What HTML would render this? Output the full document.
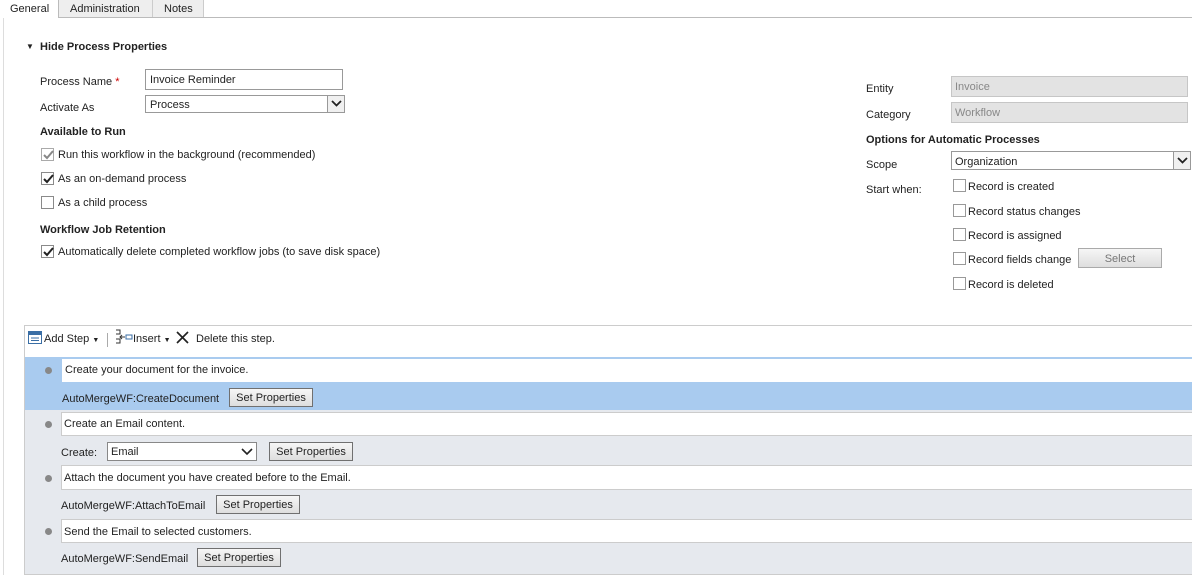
<!DOCTYPE html>
<html><head><style>
*{box-sizing:border-box}
body{margin:0;width:1192px;height:575px;background:#fff;font-family:"Liberation Sans",sans-serif;font-size:11px;color:#222;position:relative;overflow:hidden}
.a{position:absolute;white-space:nowrap}
.b{font-weight:bold}
.inp{position:absolute;border:1px solid #999;background:#fff;height:21px;padding:4px 4px;white-space:nowrap}
.dis{background:#e3e3e3;border-color:#c6c6c6;color:#888}
.dd{position:absolute;right:0;top:0;width:17px;height:19px;border-left:1px solid #999;background:#f0f0f0}
.cb{position:absolute;width:13px;height:13px;border:1px solid #8a8a8a;background:#fff}
.cb svg{position:absolute;left:0;top:0}
.btn{position:absolute;border:1px solid #707070;background:linear-gradient(#f6f6f6,#dedede);height:19px;padding:3px 0;font-size:11px;text-align:center;white-space:nowrap;overflow:hidden}
.dot{position:absolute;width:7px;height:7px;border-radius:50%;background:#888}
</style></head><body>
<div class="a" style="left:0;top:17px;width:1192px;border-top:1px solid #bbb"></div>
<div class="a" style="left:3px;top:0;height:575px;border-left:1px solid #ddd"></div>
<div class="a" style="left:0;top:0;width:59px;height:18px;background:#fff;border-right:1px solid #bbb;padding:3px 0 0 10px">General</div>
<div class="a" style="left:59px;top:0;width:94px;height:17px;background:#eee;border-right:1px solid #ccc;padding:3px 0 0 11px">Administration</div>
<div class="a" style="left:153px;top:0;width:51px;height:17px;background:#eee;border-right:1px solid #ccc;padding:3px 0 0 11px">Notes</div>
<div class="a b" style="left:26px;top:42px;font-size:8px">&#9660;</div>
<div class="a b" style="left:40px;top:41px">Hide Process Properties</div>
<div class="a" style="left:40px;top:76px">Process Name <span style="color:#c00">*</span></div>
<div class="inp" style="left:145px;top:69px;width:198px">Invoice Reminder</div>
<div class="a" style="left:40px;top:102px">Activate As</div>
<div class="inp" style="left:145px;top:95px;width:200px;height:18px;padding:3px 4px">Process<div class="dd" style="height:16px"><svg width="17" height="16"><path d="M4 5l4.5 4.5L13 5" stroke="#222" stroke-width="1.8" fill="none"/></svg></div></div>
<div class="a b" style="left:40px;top:126px">Available to Run</div>
<div class="cb" style="left:41px;top:148px;border-color:#aaa"><svg width="13" height="13"><path d="M2 6l3 3 6-7" stroke="#888" stroke-width="2" fill="none"/></svg></div>
<div class="a" style="left:58px;top:149px">Run this workflow in the background (recommended)</div>
<div class="cb" style="left:41px;top:172px"><svg width="13" height="13"><path d="M2 6l3 3 6-7" stroke="#222" stroke-width="2" fill="none"/></svg></div>
<div class="a" style="left:58px;top:173px">As an on-demand process</div>
<div class="cb" style="left:41px;top:196px"></div>
<div class="a" style="left:58px;top:197px">As a child process</div>
<div class="a b" style="left:40px;top:224px">Workflow Job Retention</div>
<div class="cb" style="left:41px;top:245px"><svg width="13" height="13"><path d="M2 6l3 3 6-7" stroke="#222" stroke-width="2" fill="none"/></svg></div>
<div class="a" style="left:58px;top:246px">Automatically delete completed workflow jobs (to save disk space)</div>
<div class="a" style="left:866px;top:83px">Entity</div>
<div class="inp dis" style="left:951px;top:76px;width:237px;padding:4px 3px">Invoice</div>
<div class="a" style="left:866px;top:109px">Category</div>
<div class="inp dis" style="left:951px;top:102px;width:237px;padding:4px 3px">Workflow</div>
<div class="a b" style="left:866px;top:134px">Options for Automatic Processes</div>
<div class="a" style="left:866px;top:159px">Scope</div>
<div class="inp" style="left:951px;top:151px;width:240px;height:19px;padding:4px 3px">Organization<div class="dd" style="height:17px"><svg width="17" height="17"><path d="M4 6l4.5 4.5L13 6" stroke="#222" stroke-width="1.8" fill="none"/></svg></div></div>
<div class="a" style="left:866px;top:184px">Start when:</div>
<div class="cb" style="left:953px;top:179px;border-color:#999"></div><div class="a" style="left:968px;top:181px">Record is created</div>
<div class="cb" style="left:953px;top:204px;border-color:#999"></div><div class="a" style="left:968px;top:206px">Record status changes</div>
<div class="cb" style="left:953px;top:228px;border-color:#999"></div><div class="a" style="left:968px;top:230px">Record is assigned</div>
<div class="cb" style="left:953px;top:252px;border-color:#999"></div><div class="a" style="left:968px;top:254px">Record fields change</div>
<div class="btn" style="left:1078px;top:248px;width:84px;height:20px;color:#777;border-color:#aaa;padding-top:4px">Select</div>
<div class="cb" style="left:953px;top:277px;border-color:#999"></div><div class="a" style="left:968px;top:279px">Record is deleted</div>
<div class="a" style="left:24px;top:325px;width:1168px;height:250px;border:1px solid #ccc;border-right:none;background:#e6e9ee"></div>
<div class="a" style="left:25px;top:326px;width:1167px;height:31px;background:#fff"></div>
<svg class="a" style="left:28px;top:331px" width="15" height="14"><rect x="0.5" y="0.5" width="13" height="12" fill="#fff" stroke="#3a6ea5"/><rect x="1" y="1" width="12" height="3" fill="#3a6ea5"/><path d="M3 7h8M3 9.5h8" stroke="#3a6ea5"/></svg>
<div class="a" style="left:44px;top:333px">Add Step <span style="font-size:7px">&#9660;</span></div>
<div class="a" style="left:107px;top:333px;height:14px;border-left:1px solid #aaa"></div>
<svg class="a" style="left:115px;top:329px" width="18" height="16"><path d="M1 1h4v4H1M1 10h4v4H1M5 8h5M7 6l-2 2 2 2" stroke="#333" fill="none"/><rect x="11" y="6" width="6" height="4" fill="#fff" stroke="#3a6ea5"/></svg>
<div class="a" style="left:133px;top:333px">Insert <span style="font-size:7px">&#9660;</span></div>
<svg class="a" style="left:176px;top:331px" width="13" height="13"><path d="M1 1l11 11M12 1L1 12" stroke="#222" stroke-width="1.7"/></svg>
<div class="a" style="left:196px;top:333px">Delete this step.</div>
<div class="a" style="left:25px;top:357px;width:1167px;height:53px;background:#a9cbef"></div>
<div class="dot" style="left:45px;top:367px"></div>
<div class="a" style="left:62px;top:359px;width:1130px;height:23px;background:#fff;padding:5px 3px">Create your document for the invoice.</div>
<div class="a" style="left:62px;top:393px">AutoMergeWF:CreateDocument</div>
<div class="btn" style="left:229px;top:388px;width:84px">Set Properties</div>
<div class="dot" style="left:45px;top:421px"></div>
<div class="a" style="left:61px;top:412px;width:1131px;height:24px;background:#fff;border:1px solid #ccc;border-right:none;padding:5px 2px">Create an Email content.</div>
<div class="a" style="left:61px;top:447px">Create:</div>
<div class="inp" style="left:107px;top:442px;width:150px;height:19px;padding:3px 3px;border-color:#888">Email<svg style="position:absolute;right:2px;top:2px" width="14" height="13"><path d="M2 4l5 5 5-5" stroke="#222" stroke-width="1.6" fill="none"/></svg></div>
<div class="btn" style="left:269px;top:442px;width:84px">Set Properties</div>
<div class="dot" style="left:45px;top:475px"></div>
<div class="a" style="left:61px;top:465px;width:1131px;height:25px;background:#fff;border:1px solid #ccc;border-right:none;padding:6px 2px">Attach the document you have created before to the Email.</div>
<div class="a" style="left:61px;top:500px">AutoMergeWF:AttachToEmail</div>
<div class="btn" style="left:216px;top:495px;width:84px">Set Properties</div>
<div class="dot" style="left:45px;top:528px"></div>
<div class="a" style="left:61px;top:519px;width:1131px;height:24px;background:#fff;border:1px solid #ccc;border-right:none;padding:6px 2px">Send the Email to selected customers.</div>
<div class="a" style="left:61px;top:553px">AutoMergeWF:SendEmail</div>
<div class="btn" style="left:197px;top:548px;width:84px">Set Properties</div>
</body></html>
